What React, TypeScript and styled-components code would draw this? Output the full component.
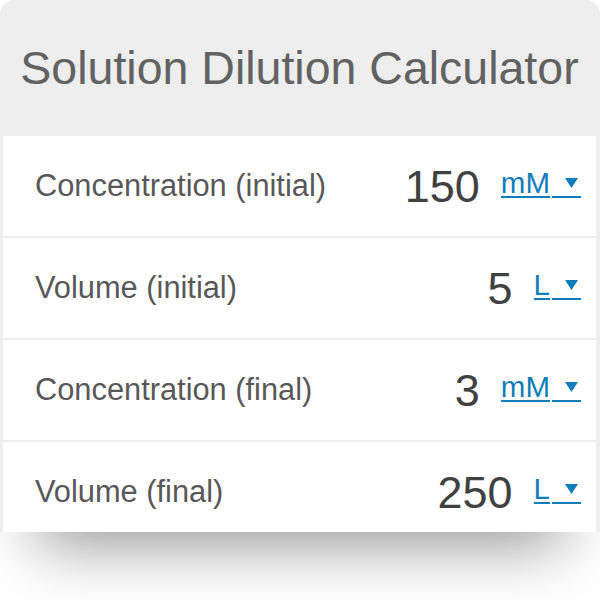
import React, { FC } from 'react';
import styled, { createGlobalStyle } from 'styled-components';

const GlobalStyle = createGlobalStyle`
  html, body {
    margin: 0;
    padding: 0;
    background: #fff;
  }
  body {
    font-family: 'Liberation Sans', Arial, Helvetica, sans-serif;
    overflow: hidden;
  }
`;

const Page = styled.div`
  width: 600px;
  height: 600px;
  overflow: hidden;
  font-family: 'Liberation Sans', Arial, Helvetica, sans-serif;
`;

const Card = styled.div`
  width: 600px;
  height: 532px;
  box-sizing: border-box;
  background: #eeeeee;
  border-radius: 14px 14px 0 0;
  padding: 0 4px 0 3px;
  display: flex;
  flex-direction: column;
  overflow: hidden;
  box-shadow: 0 50px 60px -38px rgba(0, 0, 0, 0.42);
`;

const Header = styled.div`
  height: 136px;
  flex-shrink: 0;
  display: flex;
  align-items: center;
  justify-content: center;
`;

const Title = styled.h1`
  margin: 0;
  font-size: 46.5px;
  font-weight: 400;
  color: #626262;
`;

const Rows = styled.div`
  display: flex;
  flex-direction: column;
  gap: 2px;
`;

const Row = styled.div`
  height: 100px;
  flex-shrink: 0;
  background: #fff;
  display: flex;
  align-items: center;
  justify-content: space-between;
  padding: 0 15px 0 32px;
`;

const Label = styled.span`
  font-size: 30.8px;
  color: #585858;
`;

const ValueGroup = styled.div`
  display: flex;
  align-items: center;
  gap: 21px;
`;

const Num = styled.span`
  font-size: 45px;
  line-height: 1;
  color: #414141;
`;

const Unit = styled.span`
  display: flex;
  align-items: flex-end;
  margin-bottom: 5px;
  color: #0f7db9;
  font-size: 29.5px;
`;

const UnitText = styled.span`
  display: block;
  line-height: 26px;
  border-bottom: 2px solid #0f7db9;
`;

const Caret = styled.span`
  display: flex;
  justify-content: flex-end;
  align-items: center;
  box-sizing: border-box;
  width: 29px;
  height: 28px;
  margin-left: 2px;
  padding-right: 3px;
  border-bottom: 2px solid #0f7db9;
  svg {
    display: block;
  }
`;

interface FieldProps {
  label: string;
  value: string;
  unit: string;
}

const Field: FC<FieldProps> = ({ label, value, unit }) => (
  <Row>
    <Label>{label}</Label>
    <ValueGroup>
      <Num>{value}</Num>
      <Unit>
        <UnitText>{unit}</UnitText>
        <Caret>
          <svg width="13" height="10" viewBox="0 0 13 10">
            <path d="M0 0 H13 L6.5 10 Z" fill="#0f7db9" />
          </svg>
        </Caret>
      </Unit>
    </ValueGroup>
  </Row>
);

const fields: FieldProps[] = [
  { label: 'Concentration (initial)', value: '150', unit: 'mM' },
  { label: 'Volume (initial)', value: '5', unit: 'L' },
  { label: 'Concentration (final)', value: '3', unit: 'mM' },
  { label: 'Volume (final)', value: '250', unit: 'L' },
];

export default function App() {
  return (
    <Page>
      <GlobalStyle />
      <Card>
        <Header>
          <Title>Solution Dilution Calculator</Title>
        </Header>
        <Rows>
          {fields.map((f) => (
            <Field key={f.label} {...f} />
          ))}
        </Rows>
      </Card>
    </Page>
  );
}
